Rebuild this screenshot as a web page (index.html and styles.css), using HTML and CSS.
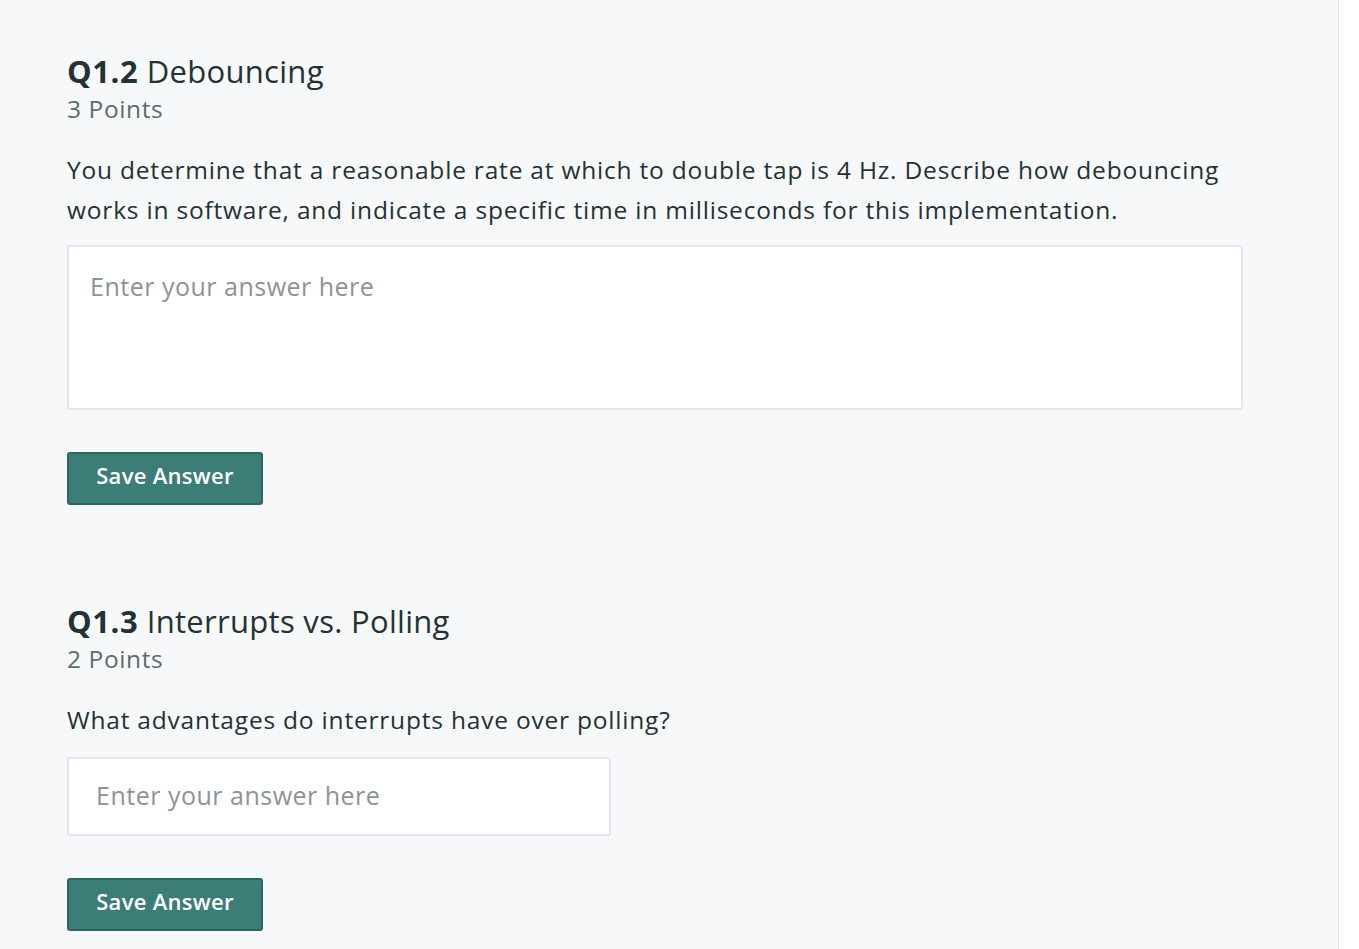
FILE: index.html
```html
<!DOCTYPE html>
<html lang="en">
<head>
    <meta charset="UTF-8">
    <title>Q1 Answers</title>
    <link rel="stylesheet" href="styles.css">
</head>
<body>
<div class="page">
    <main class="questions">
        <!-- Q1.2 -->
        <section class="question">
            <h2 class="q-title"><span class="q-num">Q1.2</span> Debouncing</h2>
            <div class="q-points">3 Points</div>
            <p class="q-text">You determine that a reasonable rate at which to double tap is 4 Hz. Describe how debouncing works in software, and indicate a specific time in milliseconds for this implementation.</p>
            <textarea class="answer-area" placeholder="Enter your answer here"></textarea>
            <button class="save-btn">Save Answer</button>
        </section>

        <!-- Q1.3 -->
        <section class="question">
            <h2 class="q-title"><span class="q-num">Q1.3</span> Interrupts vs. Polling</h2>
            <div class="q-points">2 Points</div>
            <p class="q-text">What advantages do interrupts have over polling?</p>
            <input class="answer-input" type="text" placeholder="Enter your answer here">
            <button class="save-btn">Save Answer</button>
        </section>
    </main>
</div>
</body>
</html>
```

FILE: styles.css
```css
* {
    box-sizing: border-box;
    margin: 0;
    padding: 0;
}

body {
    background-color: #fff;
    font-family: 'Open Sans', 'Lato', sans-serif;
    color: #243234;
    overflow: hidden;
}

.page {
    width: 1339px;
    height: 949px;
    background-color: #f7f8fa;
    border-right: 1px solid #e1e3e8;
}

.questions {
    padding: 51px 0 0 67px;
}

.question {
    display: flex;
    flex-direction: column;
    align-items: flex-start;
    margin-bottom: 96px;
}

.q-title {
    font-size: 31px;
    line-height: 40px;
    font-weight: 400;
    letter-spacing: 0.3px;
    color: #243234;
}

.q-num {
    font-weight: 700;
    letter-spacing: 0.6px;
}

.q-points {
    margin-top: 2px;
    font-size: 24.5px;
    line-height: 32px;
    letter-spacing: 0.6px;
    color: #5d6b6e;
}

.q-text {
    margin-top: 25px;
    width: 1180px;
    font-size: 24.5px;
    line-height: 40px;
    letter-spacing: 0.8px;
    color: #243234;
}

.answer-area,
.answer-input {
    font-family: inherit;
    font-size: 25px;
    letter-spacing: 0.5px;
    color: #243234;
    background-color: #fff;
    border: 2px solid #e2e5ea;
    border-radius: 3px;
    outline: none;
}

.answer-area::placeholder,
.answer-input::placeholder {
    color: #8b939b;
}

.answer-area {
    margin-top: 15px;
    width: 1176px;
    height: 165px;
    padding: 23px 21px;
    line-height: 32px;
    resize: none;
}

.answer-input {
    margin-top: 17px;
    width: 544px;
    height: 79px;
    padding: 0 27px 3px;
}

.save-btn {
    margin-top: 42px;
    width: 196px;
    height: 53px;
    padding-bottom: 7px;
    background-color: #3c7d77;
    border: 2px solid #2e6660;
    border-radius: 3px;
    color: #fff;
    font-family: inherit;
    font-size: 22px;
    font-weight: 600;
    letter-spacing: 0.3px;
    cursor: pointer;
}
```
